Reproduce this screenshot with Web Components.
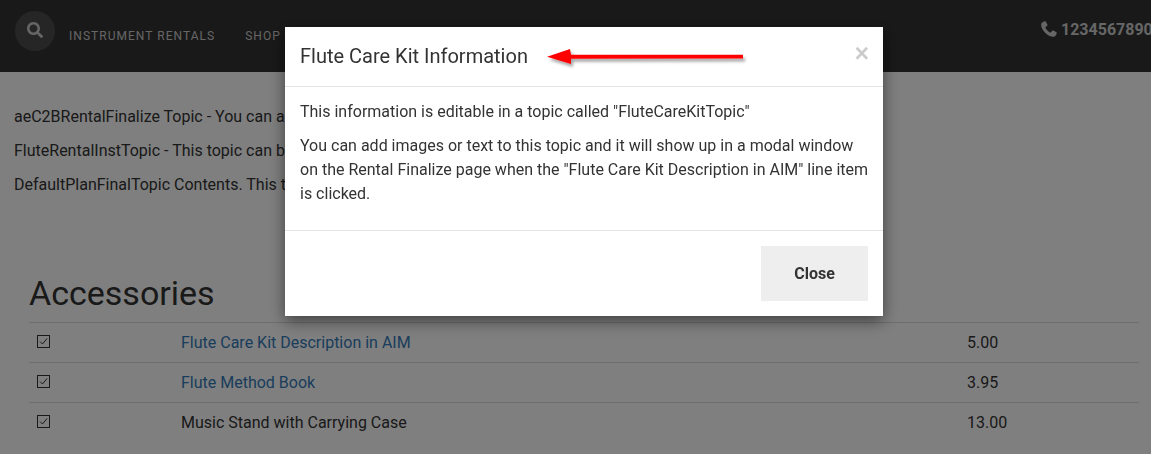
<!DOCTYPE html>
<html lang="en">
<head>
<meta charset="utf-8">
<title>Flute Care Kit Information</title>
<style>
  html, body { margin: 0; height: 100%; overflow: hidden; background: #fff; }
  body { font: 16px/24px Roboto, "Liberation Sans", sans-serif; color: #333; }
</style>
</head>
<body>
  <rental-page>
    <site-nav slot="nav" phone="1234567890">
      <nav-link>Instrument Rentals</nav-link>
      <nav-link>Shop</nav-link>
    </site-nav>

    <topic-text>aeC2BRentalFinalize Topic - You can a</topic-text>
    <topic-text>FluteRentalInstTopic - This topic can b</topic-text>
    <topic-text>DefaultPlanFinalTopic Contents. This t</topic-text>

    <accessory-list heading="Accessories">
      <accessory-row price="5.00" linked>Flute Care Kit Description in AIM</accessory-row>
      <accessory-row price="3.95" linked>Flute Method Book</accessory-row>
      <accessory-row price="13.00">Music Stand with Carrying Case</accessory-row>
    </accessory-list>
  </rental-page>

  <modal-dialog heading="Flute Care Kit Information">
    <p>This information is editable in a topic called "FluteCareKitTopic"</p>
    <p>You can add images or text to this topic and it will show up in a modal window on the Rental Finalize page when the "Flute Care Kit Description in AIM" line item is clicked.</p>
  </modal-dialog>

<script>
// Page shell: nav on top, content below
class RentalPage extends HTMLElement {
  constructor() {
    super();
    this.attachShadow({ mode: "open" });
    this.shadowRoot.innerHTML = `
      <style>
        :host { display: block; }
        main { padding: 33px 14px 0; }
      </style>
      <slot name="nav"></slot>
      <main><slot></slot></main>
    `;
  }
}

class SiteNav extends HTMLElement {
  constructor() {
    super();
    this.attachShadow({ mode: "open" });
  }

  connectedCallback() {
    this.shadowRoot.innerHTML = `
      <style>
        :host {
          display: flex;
          align-items: flex-start;
          height: 72px;
          background: #333;
          padding-left: 15px;
          white-space: nowrap;
          overflow: hidden;
        }
        .search {
          flex: none;
          display: grid;
          place-items: center;
          width: 40px;
          height: 40px;
          margin-top: 11px;
          border-radius: 50%;
          background: #4d4d4d;
        }
        .search svg { width: 16px; height: 16px; fill: #ccc; margin-top: -3px; margin-left: -1px; }
        .links { display: flex; gap: 30px; margin: 24px 0 0 14px; flex: 1; }
        .phone {
          display: flex;
          align-items: center;
          gap: 4px;
          margin: 18px 0 0 0;
          font-size: 16px;
          font-weight: 700;
          color: #ccc;
          width: 110px;
        }
        .phone svg { flex: none; width: 16px; height: 16px; fill: #ccc; margin-top: -3px; }
      </style>
      <div class="search">
        <svg viewBox="0 0 512 512"><path d="M505 442.7L405.3 343c-4.5-4.5-10.6-7-17-7H372c27.6-35.3 44-79.7 44-128C416 93.1 322.9 0 208 0S0 93.1 0 208s93.1 208 208 208c48.3 0 92.7-16.4 128-44v16.3c0 6.4 2.5 12.5 7 17l99.7 99.7c9.4 9.4 24.6 9.4 33.9 0l28.3-28.3c9.4-9.4 9.4-24.6.1-34zM208 336c-70.7 0-128-57.2-128-128 0-70.7 57.2-128 128-128 70.7 0 128 57.2 128 128 0 70.7-57.2 128-128 128z"/></svg>
      </div>
      <div class="links"><slot></slot></div>
      <div class="phone">
        <svg viewBox="0 0 16 16"><path d="M3.6 .3L1.2 1.5C.2 2.2 0 3 .2 4.5C.8 9.5 6.5 15.2 11.5 15.8C13 16 13.8 15.7 14.5 14.8L15.7 12.4C15.9 12 15.8 11.6 15.4 11.3L12.4 9.6C12 9.4 11.6 9.5 11.3 9.8L9.9 11.3C9.6 11.6 9.2 11.7 8.8 11.4C7 10.3 5.7 9 4.6 7.2C4.3 6.8 4.4 6.4 4.7 6.1L6.2 4.7C6.5 4.4 6.6 4 6.4 3.6L4.7 .6C4.4 .2 4 .1 3.6 .3Z"/></svg>
        <span>${this.getAttribute("phone")}</span>
      </div>
    `;
  }
}

class NavLink extends HTMLElement {
  constructor() {
    super();
    this.attachShadow({ mode: "open" });
    this.shadowRoot.innerHTML = `
      <style>
        :host {
          display: block;
          font-size: 12px;
          line-height: 24px;
          letter-spacing: 1.03px;
          text-transform: uppercase;
          color: #ccc;
        }
      </style>
      <slot></slot>
    `;
  }
}

class TopicText extends HTMLElement {
  constructor() {
    super();
    this.attachShadow({ mode: "open" });
    this.shadowRoot.innerHTML = `
      <style>
        :host { display: block; margin: 0 0 10px; }
      </style>
      <slot></slot>
    `;
  }
}

class AccessoryList extends HTMLElement {
  constructor() {
    super();
    this.attachShadow({ mode: "open" });
  }

  connectedCallback() {
    this.shadowRoot.innerHTML = `
      <style>
        :host { display: block; margin: 73px -2px 0 15px; }
        h2 {
          margin: 0 0 6px;
          font-size: 34px;
          font-weight: 400;
          line-height: 46px;
          color: #333;
        }
      </style>
      <h2>${this.getAttribute("heading")}</h2>
      <slot></slot>
    `;
  }
}

class AccessoryRow extends HTMLElement {
  constructor() {
    super();
    this.attachShadow({ mode: "open" });
  }

  connectedCallback() {
    this.shadowRoot.innerHTML = `
      <style>
        :host {
          display: grid;
          grid-template-columns: 152px 786px 1fr;
          align-items: center;
          height: 39px;
          border-top: 1px solid #ddd;
        }
        svg { width: 13px; height: 13px; margin: -2px 0 0 8px; display: block; }
        .link { color: #337ab7; }
      </style>
      <svg viewBox="0 0 13 13" fill="none" stroke="#333">
        <rect x=".5" y=".5" width="12" height="12"/>
        <path d="M3 6.5l2.5 2.5 4.5-5.5"/>
      </svg>
      <div class="${this.hasAttribute("linked") ? "link" : ""}"><slot></slot></div>
      <div>${this.getAttribute("price")}</div>
    `;
  }
}

// Backdrop + dialog, the red arrow sits over the header
class ModalDialog extends HTMLElement {
  constructor() {
    super();
    this.attachShadow({ mode: "open" });
  }

  connectedCallback() {
    this.shadowRoot.innerHTML = `
      <style>
        :host {
          position: fixed;
          inset: 0;
          background: rgba(0, 0, 0, .5);
        }
        .dialog {
          position: absolute;
          left: 285px;
          top: 27px;
          width: 598px;
          background: #fff;
          box-shadow: 0 5px 15px rgba(0, 0, 0, .5);
        }
        header {
          display: flex;
          justify-content: space-between;
          height: 59px;
          padding: 0 15px;
          border-bottom: 1px solid #e5e5e5;
        }
        h4 { margin: 16px 0 0; font-size: 20px; font-weight: 400; line-height: 26px; color: #333; }
        .close {
          margin: 14px -1px 0 0;
          font: 700 25px/24px "Liberation Sans", sans-serif;
          color: #000;
          opacity: .2;
        }
        .body { padding: 13px 10px 15px 15px; height: 115px; }
        ::slotted(p) { margin: 0 0 10px; }
        footer {
          display: flex;
          justify-content: flex-end;
          padding: 15px;
          border-top: 1px solid #e5e5e5;
        }
        button {
          width: 107px;
          height: 55px;
          border: 0;
          padding: 0;
          background: #eee;
          font: 700 16px Roboto, "Liberation Sans", sans-serif;
          color: #333;
        }
        .arrow { position: absolute; left: 260px; top: 18px; overflow: visible; }
      </style>
      <div class="dialog">
        <header>
          <h4>${this.getAttribute("heading")}</h4>
          <span class="close">×</span>
        </header>
        <div class="body"><slot></slot></div>
        <footer><button>Close</button></footer>
        <svg class="arrow" width="202" height="24" viewBox="0 0 202 24">
          <defs>
            <filter id="arrow-shadow" x="-5%" y="-40%" width="115%" height="200%">
              <feDropShadow dx="2" dy="3" stdDeviation="1.5" flood-color="#000" flood-opacity=".35"/>
            </filter>
          </defs>
          <path filter="url(#arrow-shadow)" fill="#f00" d="M2 11.7 L25 4 L26 9.7 L198 9.7 L198 13.5 L26 13.7 L26 19 Z"/>
        </svg>
      </div>
    `;
  }
}

customElements.define("rental-page", RentalPage);
customElements.define("site-nav", SiteNav);
customElements.define("nav-link", NavLink);
customElements.define("topic-text", TopicText);
customElements.define("accessory-list", AccessoryList);
customElements.define("accessory-row", AccessoryRow);
customElements.define("modal-dialog", ModalDialog);
</script>
</body>
</html>
